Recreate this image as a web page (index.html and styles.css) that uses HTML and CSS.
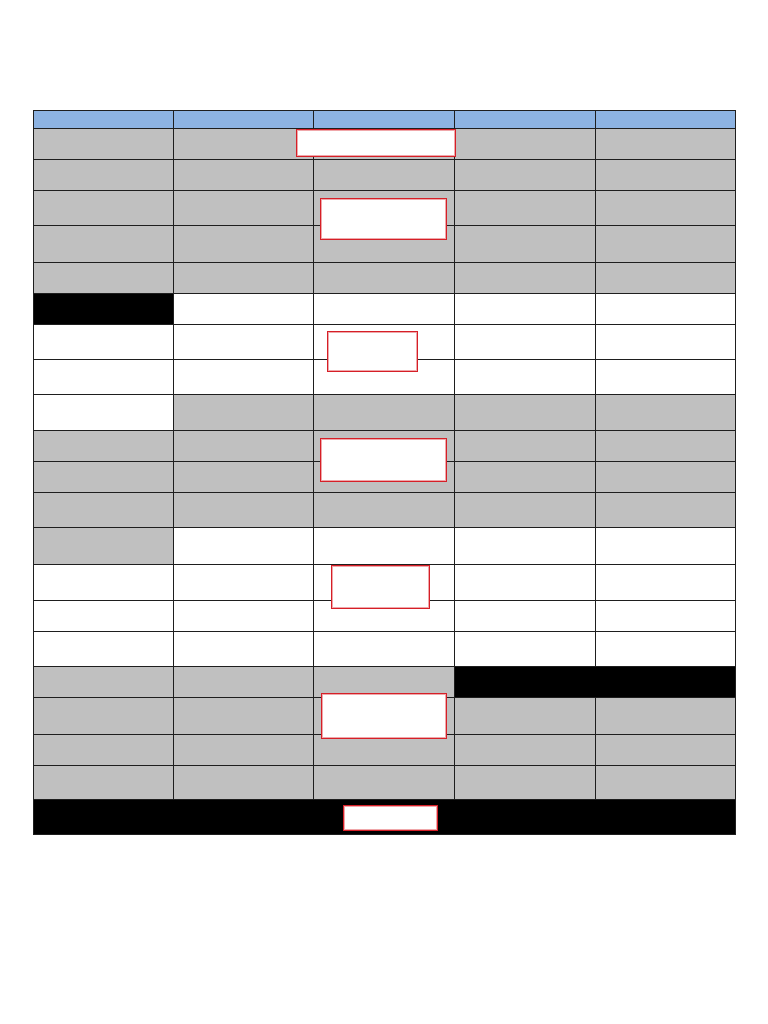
FILE: index.html
```html
<!DOCTYPE html>
<html>
<head>
<meta charset="utf-8">
<link rel="stylesheet" href="styles.css">
</head>
<body>
<div class="page">
  <div class="sheet">
    <div class="grid">
      <div class="c h"></div><div class="c h"></div><div class="c h"></div><div class="c h"></div><div class="c h"></div>
      <div class="c g"></div><div class="c g"></div><div class="c g"></div><div class="c g"></div><div class="c g"></div>
      <div class="c g"></div><div class="c g"></div><div class="c g"></div><div class="c g"></div><div class="c g"></div>
      <div class="c g"></div><div class="c g"></div><div class="c g"></div><div class="c g"></div><div class="c g"></div>
      <div class="c g"></div><div class="c g"></div><div class="c g"></div><div class="c g"></div><div class="c g"></div>
      <div class="c g"></div><div class="c g"></div><div class="c g"></div><div class="c g"></div><div class="c g"></div>
      <div class="c k"></div><div class="c w"></div><div class="c w"></div><div class="c w"></div><div class="c w"></div>
      <div class="c w"></div><div class="c w"></div><div class="c w"></div><div class="c w"></div><div class="c w"></div>
      <div class="c w"></div><div class="c w"></div><div class="c w"></div><div class="c w"></div><div class="c w"></div>
      <div class="c w"></div><div class="c g"></div><div class="c g"></div><div class="c g"></div><div class="c g"></div>
      <div class="c g"></div><div class="c g"></div><div class="c g"></div><div class="c g"></div><div class="c g"></div>
      <div class="c g"></div><div class="c g"></div><div class="c g"></div><div class="c g"></div><div class="c g"></div>
      <div class="c g"></div><div class="c g"></div><div class="c g"></div><div class="c g"></div><div class="c g"></div>
      <div class="c g"></div><div class="c w"></div><div class="c w"></div><div class="c w"></div><div class="c w"></div>
      <div class="c w"></div><div class="c w"></div><div class="c w"></div><div class="c w"></div><div class="c w"></div>
      <div class="c w"></div><div class="c w"></div><div class="c w"></div><div class="c w"></div><div class="c w"></div>
      <div class="c w"></div><div class="c w"></div><div class="c w"></div><div class="c w"></div><div class="c w"></div>
      <div class="c g"></div><div class="c g"></div><div class="c g"></div><div class="c k span2"></div>
      <div class="c g"></div><div class="c g"></div><div class="c g"></div><div class="c g"></div><div class="c g"></div>
      <div class="c g"></div><div class="c g"></div><div class="c g"></div><div class="c g"></div><div class="c g"></div>
      <div class="c g"></div><div class="c g"></div><div class="c g"></div><div class="c g"></div><div class="c g"></div>
      <div class="c k span5"></div>
    </div>
    <div class="box b1"></div>
    <div class="box b2"></div>
    <div class="box b3"></div>
    <div class="box b4"></div>
    <div class="box b5"></div>
    <div class="box b6"></div>
    <div class="box b7"></div>
  </div>
</div>
</body>
</html>
```

FILE: styles.css
```css
html, body {
  margin: 0;
  padding: 0;
  background: #ffffff;
  font-family: "Liberation Sans", Arial, sans-serif;
}
.page {
  padding: 110px 0 0 33px;
}
.sheet {
  position: relative;
  width: 703px;
}
.grid {
  display: grid;
  grid-template-columns: 139px 139px 140px 140px 139px;
  grid-template-rows: 17px 30px 30px 34px 36px 30px 30px 34px 34px 35px 30px 30px 34px 36px 35px 30px 34px 30px 36px 30px 33px 34px;
  gap: 1px;
  padding: 1px;
  background: #1e1e1e;
}
.c { min-width: 0; }
.h { background: #8db3e2; }
.g { background: #c0c0c0; }
.w { background: #ffffff; }
.k { background: #000000; }
.span2 { grid-column: span 2; }
.span5 { grid-column: span 5; }
.box {
  position: absolute;
  box-sizing: border-box;
  background: #ffffff;
  border: 1px solid #d61f27;
  box-shadow: inset 0 0 0 1px rgba(220, 60, 66, 0.45);
}
.b1 { left: 263px; top: 19px; width: 160px; height: 28px; }
.b2 { left: 287px; top: 88px; width: 127px; height: 42px; }
.b3 { left: 294px; top: 221px; width: 91px; height: 41px; }
.b4 { left: 287px; top: 328px; width: 127px; height: 44px; }
.b5 { left: 298px; top: 455px; width: 99px; height: 44px; }
.b6 { left: 288px; top: 583px; width: 126px; height: 46px; }
.b7 { left: 310px; top: 695px; width: 95px; height: 26px; }
```
